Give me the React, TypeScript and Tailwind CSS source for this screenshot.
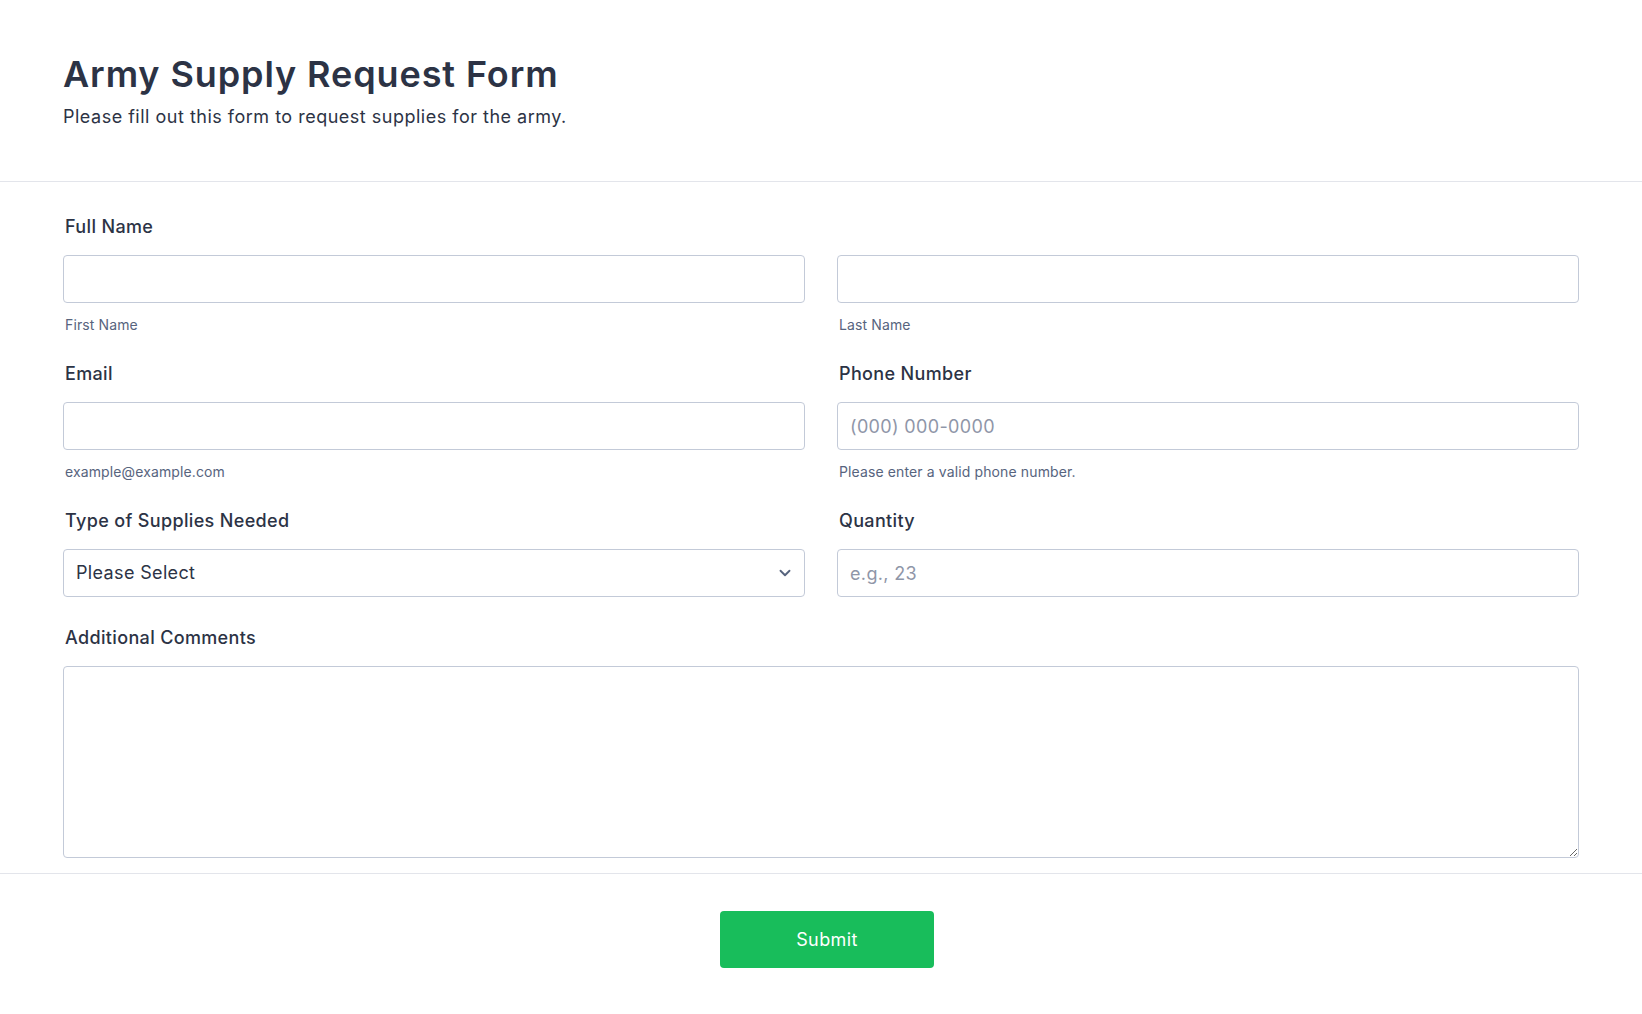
import { ChevronDown } from "lucide-react";

const inputCls =
  "block h-12 w-full rounded-[4px] border border-[#c3cad8] bg-white px-3 text-lg tracking-[0.35px] text-[#2c3345] placeholder:text-[#8f96a8] outline-none";

function Label({ children }: { children: React.ReactNode }) {
  return (
    <label className="block px-0.5 text-lg font-medium leading-7 tracking-[0.35px] text-[#2c3345]">
      {children}
    </label>
  );
}

function Hint({ children }: { children: React.ReactNode }) {
  return (
    <p className="mt-3 px-0.5 text-sm leading-5 tracking-[0.12px] text-[#57647e]">
      {children}
    </p>
  );
}

export default function App() {
  return (
    <div
      className="min-h-screen bg-white text-[#2c3345]"
      style={{ fontFamily: "Inter, 'Noto Sans', sans-serif" }}
    >
      {/* Header */}
      <header className="border-b border-[#e3e5eb] px-[63px] pt-[54px] pb-[50px]">
        <h1 className="text-4xl font-semibold leading-10 tracking-[0.9px]">
          Army Supply Request Form
        </h1>
        <p className="mt-[9px] text-lg leading-7 tracking-[0.5px]">
          Please fill out this form to request supplies for the army.
        </p>
      </header>

      {/* Fields */}
      <main className="border-b border-[#e3e5eb] px-[63px] pt-[31px] pb-[15px]">
        <div className="grid grid-cols-2 gap-x-8">
          <div className="col-span-2">
            <Label>Full Name</Label>
          </div>
          <div className="mt-3.5">
            <input className={inputCls} />
            <Hint>First Name</Hint>
          </div>
          <div className="mt-3.5">
            <input className={inputCls} />
            <Hint>Last Name</Hint>
          </div>

          <div className="mt-[25px]">
            <Label>Email</Label>
            <input className={`${inputCls} mt-3.5`} />
            <Hint>example@example.com</Hint>
          </div>
          <div className="mt-[25px]">
            <Label>Phone Number</Label>
            <input className={`${inputCls} mt-3.5`} placeholder="(000) 000-0000" />
            <Hint>Please enter a valid phone number.</Hint>
          </div>

          <div className="mt-[25px]">
            <Label>Type of Supplies Needed</Label>
            <div className="relative mt-3.5">
              <select
                className={`${inputCls} appearance-none pr-10`}
                defaultValue=""
              >
                <option value="">Please Select</option>
                <option>Food</option>
                <option>Ammunition</option>
                <option>Medical</option>
              </select>
              <ChevronDown
                className="pointer-events-none absolute right-[11px] top-1/2 h-[18px] w-[18px] -translate-y-1/2 text-[#57647e]"
                strokeWidth={2.5}
              />
            </div>
          </div>
          <div className="mt-[25px]">
            <Label>Quantity</Label>
            <input className={`${inputCls} mt-3.5`} placeholder="e.g., 23" />
          </div>

          <div className="col-span-2 mt-[27px]">
            <Label>Additional Comments</Label>
            <textarea className="mt-3.5 block h-[192px] w-full rounded-[4px] border border-[#c3cad8] bg-white px-3 py-2 text-lg outline-none" />
          </div>
        </div>
      </main>

      {/* Footer */}
      <footer className="flex justify-center pt-[37px] pb-[47px]">
        <button
          type="button"
          className="ml-3 h-[57px] w-[214px] rounded-[4px] bg-[#18bd5b] text-lg tracking-[0.4px] text-white"
        >
          Submit
        </button>
      </footer>
    </div>
  );
}
